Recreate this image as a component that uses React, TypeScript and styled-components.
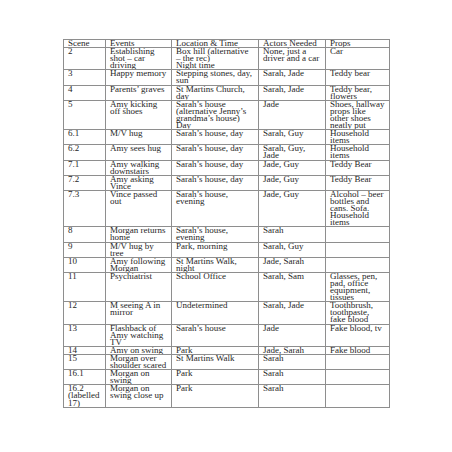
import styled, { createGlobalStyle } from 'styled-components';

const GlobalStyle = createGlobalStyle`
  html, body {
    margin: 0;
    padding: 0;
    background: #ffffff;
  }
`;

const Page = styled.div`
  width: 452px;
  height: 452px;
  padding: 39px 0 0 63px;
  box-sizing: border-box;
  background: #ffffff;
`;

const SceneTable = styled.table`
  border-collapse: collapse;
  table-layout: fixed;
  width: 326px;
  font-family: 'Liberation Serif', 'Times New Roman', serif;
  font-size: 9px;
  line-height: 7.1px;
  color: #262626;
`;

const Col = styled.col<{ $w: number }>`
  width: ${(p) => p.$w}px;
`;

const Cell = styled.td`
  border: 1px solid #8e8e8e;
  padding: 0 2px 0 4px;
  vertical-align: top;
  white-space: nowrap;
  overflow: hidden;
`;

const HeadCell = styled(Cell).attrs({ as: 'th' })`
  font-weight: normal;
  text-align: left;
`;

const Line = styled.span`
  display: block;
`;

const widths = [42, 66, 87, 67, 64];

const headers = ['Scene', 'Events', 'Location & Time', 'Actors Needed', 'Props'];

const rows: string[][][] = [
  [['2'], ['Establishing', 'shot – car', 'driving'], ['Box hill (alternative', '– the rec)', 'Night time'], ['None, just a', 'driver and a car'], ['Car']],
  [['3'], ['Happy memory'], ['Stepping stones, day,', 'sun'], ['Sarah, Jade'], ['Teddy bear']],
  [['4'], ['Parents’ graves'], ['St Martins Church,', 'day'], ['Sarah, Jade'], ['Teddy bear,', 'flowers']],
  [['5'], ['Amy kicking', 'off shoes'], ['Sarah’s house', '(alternative Jenny’s', 'grandma’s house)', 'Day'], ['Jade'], ['Shoes, hallway', 'props like', 'other shoes', 'neatly put']],
  [['6.1'], ['M/V hug'], ['Sarah’s house, day'], ['Sarah, Guy'], ['Household', 'items']],
  [['6.2'], ['Amy sees hug'], ['Sarah’s house, day'], ['Sarah, Guy,', 'Jade'], ['Household', 'items']],
  [['7.1'], ['Amy walking', 'downstairs'], ['Sarah’s house, day'], ['Jade, Guy'], ['Teddy Bear']],
  [['7.2'], ['Amy asking', 'Vince'], ['Sarah’s house, day'], ['Jade, Guy'], ['Teddy Bear']],
  [['7.3'], ['Vince passed', 'out'], ['Sarah’s house,', 'evening'], ['Jade, Guy'], ['Alcohol – beer', 'bottles and', 'cans. Sofa.', 'Household', 'items']],
  [['8'], ['Morgan returns', 'home'], ['Sarah’s house,', 'evening'], ['Sarah'], []],
  [['9'], ['M/V hug by', 'tree'], ['Park, morning'], ['Sarah, Guy'], []],
  [['10'], ['Amy following', 'Morgan'], ['St Martins Walk,', 'night'], ['Jade, Sarah'], []],
  [['11'], ['Psychiatrist'], ['School Office'], ['Sarah, Sam'], ['Glasses, pen,', 'pad, office', 'equipment,', 'tissues']],
  [['12'], ['M seeing A in', 'mirror'], ['Undetermined'], ['Sarah, Jade'], ['Toothbrush,', 'toothpaste,', 'fake blood']],
  [['13'], ['Flashback of', 'Amy watching', 'TV'], ['Sarah’s house'], ['Jade'], ['Fake blood, tv']],
  [['14'], ['Amy on swing'], ['Park'], ['Jade, Sarah'], ['Fake blood']],
  [['15'], ['Morgan over', 'shoulder scared'], ['St Martins Walk'], ['Sarah'], []],
  [['16.1'], ['Morgan on', 'swing'], ['Park'], ['Sarah'], []],
  [['16.2', '(labelled', '17)'], ['Morgan on', 'swing close up'], ['Park'], ['Sarah'], []],
];

function App() {
  return (
    <>
      <GlobalStyle />
      <Page>
        <SceneTable>
          <colgroup>
            {widths.map((w, idx) => (
              <Col $w={w} key={idx} />
            ))}
          </colgroup>
          <thead>
            <tr>
              {headers.map((h) => (
                <HeadCell key={h}>{h}</HeadCell>
              ))}
            </tr>
          </thead>
          <tbody>
            {rows.map((row, rIdx) => (
              <tr key={rIdx}>
                {row.map((lines, cIdx) => (
                  <Cell key={cIdx}>
                    {lines.length === 0 ? <Line>&nbsp;</Line> : lines.map((l, i) => <Line key={i}>{l}</Line>)}
                  </Cell>
                ))}
              </tr>
            ))}
          </tbody>
        </SceneTable>
      </Page>
    </>
  );
}

export default App;
